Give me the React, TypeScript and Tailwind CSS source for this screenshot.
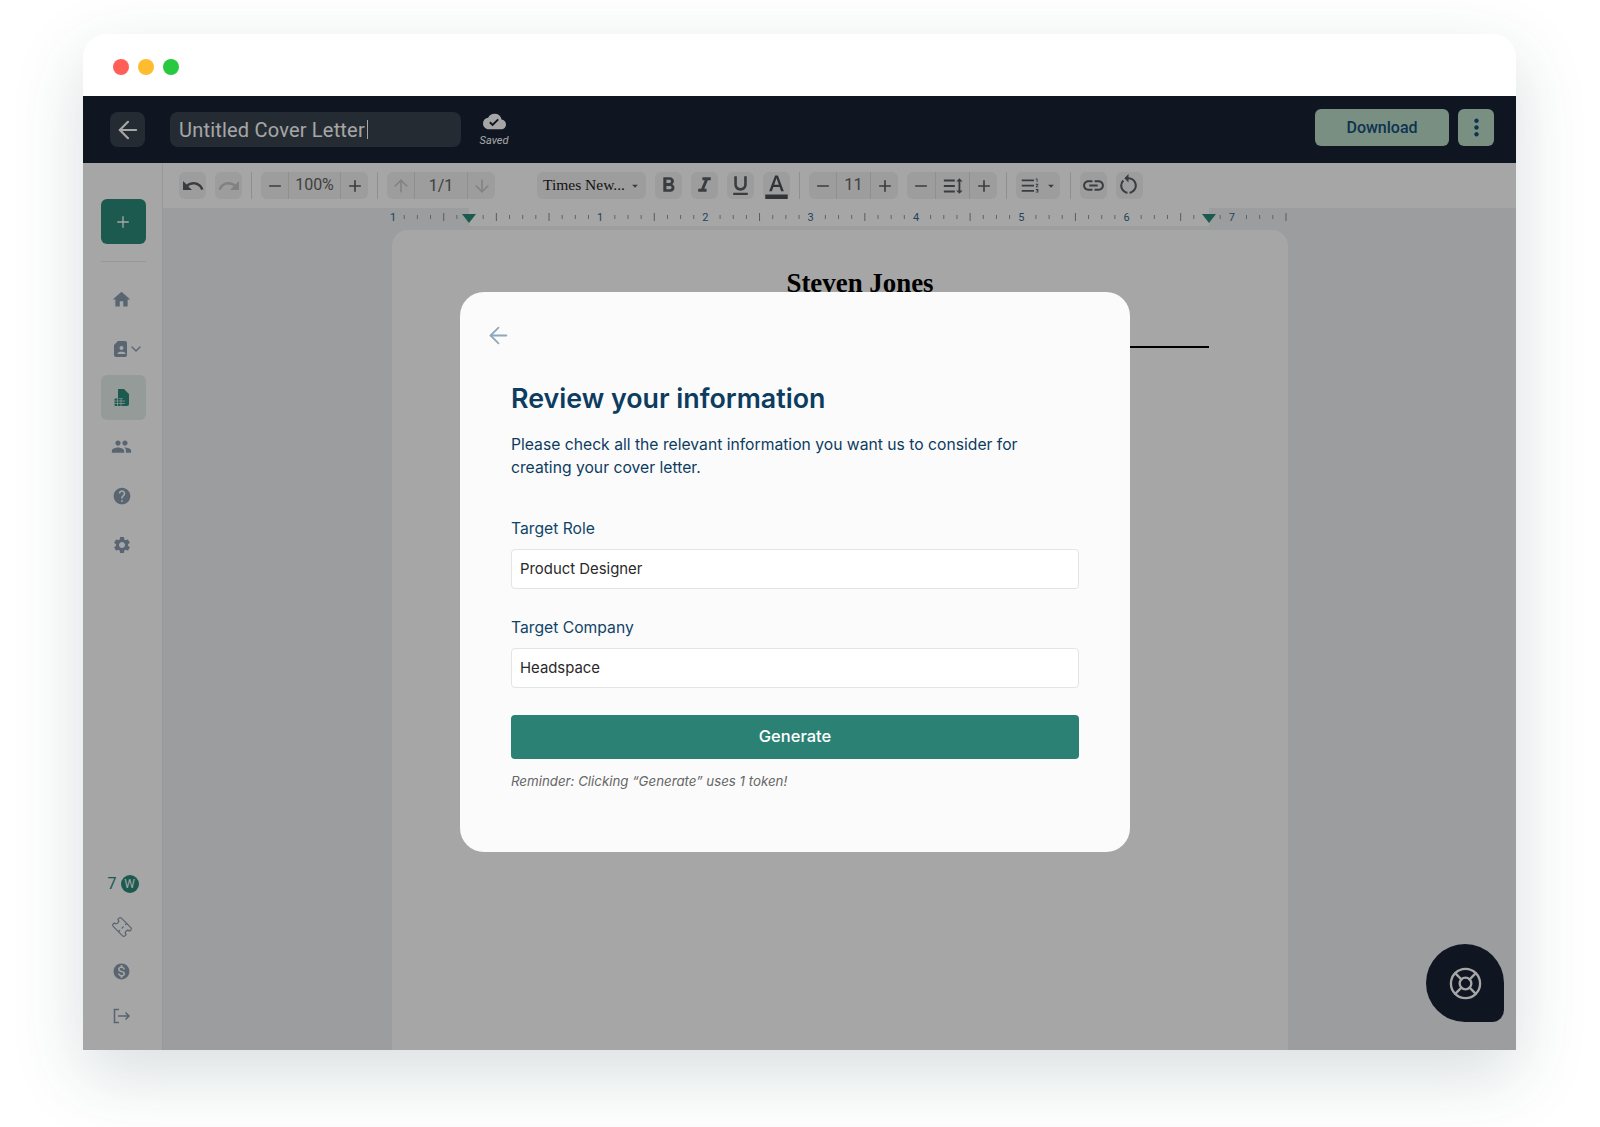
import React from "react";
import { ArrowLeft, LifeBuoy, Ticket, Plus, Minus, ChevronDown, ArrowUp, ArrowDown } from "lucide-react";
import {
  MdHome, MdPeople, MdHelp, MdSettings, MdMonetizationOn, MdCloudDone, MdUndo, MdRedo,
  MdFormatBold, MdFormatItalic, MdFormatUnderlined, MdFormatColorText, MdFormatLineSpacing,
  MdFormatListNumberedRtl, MdLink, MdRestartAlt, MdMoreVert, MdArrowDropDown,
} from "react-icons/md";

const roboto = "font-['Roboto',sans-serif]";

function Btn({ children, className = "" }: { children?: React.ReactNode; className?: string }) {
  return <div className={`h-[27px] flex items-center justify-center bg-[#f1f1f1] rounded-md ${className}`}>{children}</div>;
}

function Sep({ className = "" }: { className?: string }) {
  return <div className={`w-px h-[27px] bg-[#dcdcdc] ${className}`} />;
}

function Cell({ children, w, border = false, dim = false }: { children: React.ReactNode; w: string; border?: boolean; dim?: boolean }) {
  return (
    <div className={`h-full flex items-center justify-center ${w} ${border ? "border-x border-[#dcdcdc]" : ""} ${dim ? "text-[#c4c6c8]" : "text-[#5a5e62]"}`}>
      {children}
    </div>
  );
}

function Ruler() {
  const ticks: React.ReactNode[] = [];
  const labels: Record<number, string> = { [-12]: "1", 4: "1", 12: "2", 20: "3", 28: "4", 36: "5", 44: "6", 52: "7" };
  for (let i = -11; i <= 56; i++) {
    const x = 549 + i * 13.16 - 392;
    if (labels[i]) continue;
    const long = i % 4 === 0;
    ticks.push(<line key={i} x1={x} x2={x} y1={long ? 5 : 7} y2={long ? 13 : 11} stroke="#8c8c8c" strokeWidth={long ? 1 : 0.9} />);
  }
  return (
    <svg width="900" height="18" viewBox="0 0 900 18" className="block overflow-visible">
      <rect x="77" y="0" width="740" height="18" fill="#ffffff" />
      {ticks}
      {Object.entries(labels).map(([i, t]) => (
        <text key={i} x={549 + Number(i) * 13.16 - 392 + (Number(i) === -12 ? 2 : -1.5)} y="13" fontSize="11" textAnchor="middle" fill="#2f6a90" fontFamily="Roboto, sans-serif">{t}</text>
      ))}
      <polygon points="70,6 84,6 77,15" fill="#2b8a7a" />
      <polygon points="810,6 824,6 817,15" fill="#2b8a7a" />
    </svg>
  );
}

function Toolbar() {
  const ic = "text-[#5a5e62]";
  return (
    <div className={`h-[45px] shrink-0 bg-white flex items-center pl-[16px] ${roboto}`}>
      <Btn className="w-[27px]"><MdUndo size={24} className={ic} /></Btn>
      <Btn className="w-[27px] ml-[9px]"><MdRedo size={24} className="text-[#c4c6c8]" /></Btn>
      <Sep className="ml-[9px]" />
      <Btn className="w-[107px] ml-[9px]">
        <Cell w="w-[27px]"><Minus size={18} strokeWidth={2.2} /></Cell>
        <Cell w="w-[53px]" border><span className="text-[16px] leading-[20px] mt-[-1px] text-[#636363]">100%</span></Cell>
        <Cell w="w-[27px]"><Plus size={18} strokeWidth={2.2} /></Cell>
      </Btn>
      <Sep className="ml-[9px]" />
      <Btn className="w-[108px] ml-[9px]">
        <Cell w="w-[27px]" dim><ArrowUp size={20} strokeWidth={1.8} /></Cell>
        <Cell w="w-[54px]" border><span className="text-[16px] text-[#636363]">1/1</span></Cell>
        <Cell w="w-[27px]" dim><ArrowDown size={20} strokeWidth={1.8} /></Cell>
      </Btn>
      <Btn className="w-[109px] ml-[42px] justify-start pl-[6px]">
        <span className="font-['Liberation_Serif',serif] text-[15.5px] leading-[20px] mt-[-2px] text-[#1c1c1c] whitespace-nowrap">Times New...</span>
        <MdArrowDropDown size={14} className="ml-[3px] text-[#5a5e62]" />
      </Btn>
      <Btn className="w-[27px] ml-[9px]"><MdFormatBold size={25} className={ic} /></Btn>
      <Btn className="w-[27px] ml-[9px]"><MdFormatItalic size={25} className={ic} /></Btn>
      <Btn className="w-[27px] ml-[9px]"><MdFormatUnderlined size={25} className={ic} /></Btn>
      <Btn className="w-[27px] ml-[9px]"><MdFormatColorText size={27} className="text-[#4c5054]" /></Btn>
      <Sep className="ml-[9px]" />
      <Btn className="w-[89px] ml-[9px]">
        <Cell w="w-[27px]"><Minus size={18} strokeWidth={2.2} /></Cell>
        <Cell w="w-[35px]" border><span className="text-[16.5px] text-[#636363]">11</span></Cell>
        <Cell w="w-[27px]"><Plus size={18} strokeWidth={2.2} /></Cell>
      </Btn>
      <Btn className="w-[90px] ml-[9px]">
        <Cell w="w-[28px]"><Minus size={18} strokeWidth={2.2} /></Cell>
        <Cell w="w-[35px]" border><MdFormatLineSpacing size={22} style={{ transform: "scaleX(-1)" }} /></Cell>
        <Cell w="w-[27px]"><Plus size={18} strokeWidth={2.2} /></Cell>
      </Btn>
      <Sep className="ml-[9px]" />
      <Btn className="w-[44px] ml-[9px] justify-start pl-[4px]">
        <MdFormatListNumberedRtl size={21} className={ic} />
        <MdArrowDropDown size={14} className="ml-[3px] text-[#5a5e62]" />
      </Btn>
      <Sep className="ml-[10px]" />
      <Btn className="w-[27px] ml-[9px]"><MdLink size={25} className={ic} /></Btn>
      <Btn className="w-[27px] ml-[9px] pr-[2px] pb-[2px]"><MdRestartAlt size={25} className={ic} /></Btn>
    </div>
  );
}

function Sidebar() {
  const c = "text-[#8a9cb0]";
  const row = "h-[49px] w-full flex items-center justify-center shrink-0 pr-[3px]";
  const low = "w-full flex items-center justify-center shrink-0 pr-[3px]";
  return (
    <aside className={`w-[80px] shrink-0 bg-white border-r border-[#ececec] flex flex-col items-center pt-[36px] pb-[12px] pl-[1px] ${roboto}`}>
      <div className="w-[45px] h-[45px] rounded-md bg-[#2b8a7a] flex items-center justify-center text-white"><Plus size={18} strokeWidth={1.8} /></div>
      <div className="w-[45px] h-px bg-[#e8e8e8] mt-[17px] mb-[13px]" />
      <div className={row}><MdHome size={21} className={c} /></div>
      <div className="h-[49px] w-full flex items-center justify-center shrink-0">
        <div className="flex items-center ml-[12px]">
          <svg width="13" height="16" viewBox="0 0 13 16"><path d="M4 0h7a2 2 0 0 1 2 2v12a2 2 0 0 1-2 2H2a2 2 0 0 1-2-2V4z" fill="#8a9cb0" /><circle cx="7.5" cy="7" r="2" fill="#fff" /><path d="M3.5 12.5c0-2.2 8-2.2 8 0v.6h-8z" fill="#fff" /></svg>
          <ChevronDown size={16} className={`${c} ml-[1px]`} />
        </div>
      </div>
      <div className="w-[45px] h-[45px] rounded-md bg-[#e3efeb] flex items-center justify-center shrink-0 my-[2px] pr-[3px]">
        <svg width="16" height="18" viewBox="0 0 16 18"><path d="M4 0h6l5 5v10a2 2 0 0 1-2 2H9V9H4z" fill="#2b8a7a" /><rect x="0.5" y="9.5" width="10" height="7.5" rx="1" fill="#2b8a7a" /><path d="M0 12h11M0 14.5h11M3.5 9.5v7.5M7 9.5v7.5" stroke="#e3efeb" strokeWidth="0.7" /></svg>
      </div>
      <div className={row}><MdPeople size={21} className={c} /></div>
      <div className={row}><MdHelp size={20} className={c} /></div>
      <div className={row}><MdSettings size={20} className={c} /></div>
      <div className="mt-auto flex flex-col items-center w-full">
        <div className="h-[36px] mb-[2px] flex items-center gap-[4px] shrink-0">
          <span className="text-[16px] text-[#2b8a7a]">7</span>
          <span className="w-[18px] h-[18px] rounded-full bg-[#2b8a7a] text-white text-[12px] flex items-center justify-center">W</span>
        </div>
        <div className={`h-[45px] ${low}`}><Ticket size={20} strokeWidth={1.5} className={`${c} rotate-[45deg]`} /></div>
        <div className={`h-[44px] ${low}`}><MdMonetizationOn size={19} className={c} /></div>
        <div className={`h-[45px] ${low}`}>
          <svg width="18" height="16" viewBox="0 0 18 16" fill="none" stroke="#8a9cb0" strokeWidth="1.6"><path d="M6 1.5H1.5v13H6" /><path d="M5 8h11M12.5 4.5 16 8l-3.5 3.5" /></svg>
        </div>
      </div>
    </aside>
  );
}

function Field({ label, value, className = "" }: { label: string; value: string; className?: string }) {
  return (
    <div className={className}>
      <div className="text-[15.7px] leading-[22px] text-[#0f4468]">{label}</div>
      <div className="mt-[8.5px] h-[40px] rounded-[4px] border border-[#e2e4e6] bg-white flex items-center pl-[8px] pt-[1px] text-[14.9px] text-[#2a2a2a]">{value}</div>
    </div>
  );
}

export default function App() {
  return (
    <div className="w-[1600px] h-[1127px] bg-white overflow-hidden pt-[34px] pl-[83px]">
      <div className="relative w-[1433px] h-[1016px] bg-white rounded-t-[24px] flex flex-col shadow-[0_24px_70px_rgba(40,70,80,0.18)]">
        <div className="h-[62px] shrink-0 rounded-t-[24px] bg-white flex items-center gap-[9px] pl-[30px] pt-[4px]">
          <span className="w-[16px] h-[16px] rounded-full bg-[#ff5f57]" />
          <span className="w-[16px] h-[16px] rounded-full bg-[#febc2e]" />
          <span className="w-[16px] h-[16px] rounded-full bg-[#28c840]" />
        </div>

        <header className={`h-[67px] shrink-0 bg-[#172334] flex items-center pl-[27px] pr-[22px] ${roboto}`}>
          <div className="w-[35px] h-[35px] rounded-lg bg-[#38424f] flex items-center justify-center text-white"><ArrowLeft size={28} strokeWidth={1.9} /></div>
          <div className="w-[291px] h-[35px] ml-[25px] rounded-lg bg-[#38424f] flex items-center pl-[9px] text-[20px] tracking-[0.2px] text-white">Untitled Cover Letter<span className="w-px h-[19px] bg-white ml-[2px]" /></div>
          <div className="ml-[18px] w-[30px] flex flex-col items-center text-white">
            <MdCloudDone size={23} className="mt-[-3px]" />
            <span className="text-[11px] italic leading-[13px] mt-[1px]">Saved</span>
          </div>
          <div className="ml-auto mb-[4px] w-[134px] h-[37px] rounded-md bg-[#b8dcc8] flex items-center justify-center text-[16px] font-medium text-[#164f78]">Download</div>
          <div className="ml-[9px] mb-[4px] w-[36px] h-[37px] rounded-md bg-[#b8dcc8] flex items-center justify-center text-[#164f78]"><MdMoreVert size={27} /></div>
        </header>

        <div className="flex-1 flex min-h-0">
          <Sidebar />
          <main className="flex-1 flex flex-col min-w-0 bg-[#f0f2f3] overflow-hidden">
            <Toolbar />
            <div className="h-[18px] shrink-0 ml-[229px]"><Ruler /></div>
            <div className="flex-1 mt-[4px] ml-[229px] w-[896px] bg-white rounded-t-[16px] pl-[77px] pr-[79px] pt-[37px]">
              <div className="pl-[42px] text-center font-['Liberation_Serif',serif] font-bold text-[26.9px] leading-[32px] text-black">Steven Jones</div>
              <div className="h-[2px] bg-black mt-[47px]" />
            </div>
          </main>
        </div>

        <div className="absolute right-[12px] bottom-[28px] w-[78px] h-[78px] rounded-[39px] rounded-br-[12px] bg-[#172334] flex items-center justify-center text-white">
          <LifeBuoy size={35} strokeWidth={1.6} />
        </div>

        {/* dim layer and dialog */}
        <div className="absolute left-0 right-0 top-[62px] bottom-0 bg-black/35" />
        <div className="absolute left-[377px] top-[258px] w-[670px] h-[560px] rounded-[24px] bg-[#fbfbfb] font-['Inter',sans-serif] pl-[51px] pr-[51px] pt-[30px]">
          <ArrowLeft size={27} strokeWidth={1.6} className="text-[#8fa9ba] ml-[-26px]" />
          <h1 className="mt-[31px] text-[26.8px] leading-[36px] font-semibold text-[#0d3c61]">Review your information</h1>
          <p className="mt-[18px] text-[15.7px] leading-[22.5px] text-[#0d3c61]">Please check all the relevant information you want us to consider for<br />creating your cover letter.</p>
          <Field label="Target Role" value="Product Designer" className="mt-[39px]" />
          <Field label="Target Company" value="Headspace" className="mt-[28.5px]" />
          <button className="mt-[27px] w-full h-[44px] rounded-[4px] bg-[#2b8274] text-white text-[16.5px] font-medium block">Generate</button>
          <p className="mt-[13px] text-[13.3px] leading-[18px] italic text-[#666]">Reminder: Clicking “Generate” uses 1 token!</p>
        </div>
      </div>
    </div>
  );
}
